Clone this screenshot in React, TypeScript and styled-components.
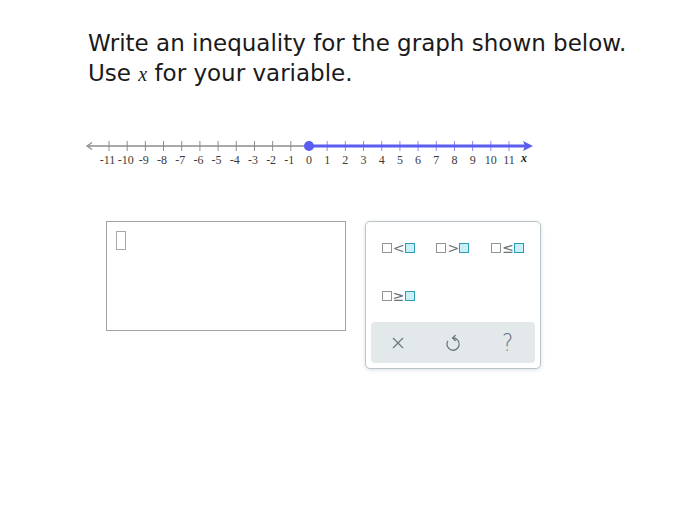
import styled, { createGlobalStyle } from 'styled-components';

const GlobalStyle = createGlobalStyle`
  body {
    margin: 0;
    background: #ffffff;
    font-family: "DejaVu Sans", Verdana, sans-serif;
  }
`;

const Page = styled.div`
  width: 700px;
  height: 524px;
  padding: 28px 0 0 88px;
  box-sizing: border-box;
`;

const Prompt = styled.p`
  margin: 0;
  font-size: 23px;
  line-height: 30px;
  color: #1a1a1a;
`;

const Var = styled.span`
  font-family: "Liberation Serif", "Times New Roman", serif;
  font-style: italic;
  font-size: 20px;
`;

const LineWrap = styled.div`
  margin: 47px 0 0 -8px;
  height: 40px;

  svg {
    display: block;
  }
`;

const AnswerRow = styled.div`
  display: flex;
  align-items: flex-start;
  gap: 19px;
  margin: 45px 0 0 18px;
`;

const AnswerBox = styled.div`
  width: 240px;
  height: 110px;
  box-sizing: border-box;
  border: 1px solid #a3a3a3;
  padding: 9px 0 0 9px;
`;

const Cursor = styled.div`
  width: 10px;
  height: 19px;
  box-sizing: border-box;
  border: 1px solid #a8a8a8;
`;

const Keypad = styled.div`
  width: 176px;
  box-sizing: border-box;
  border: 1px solid #b9c4c8;
  border-radius: 5px;
  box-shadow: 0 1px 4px rgba(0, 40, 60, 0.15);
  padding: 4px 5px 5px 5px;
  background: #fff;
`;

const KeyGrid = styled.div`
  display: grid;
  grid-template-columns: repeat(3, 1fr);
  grid-auto-rows: 44px;
  row-gap: 4px;
  margin-bottom: 4px;
`;

const Key = styled.div`
  display: flex;
  align-items: center;
  justify-content: center;
  gap: 1px;
  color: #6d7478;
  font-size: 14px;
  font-family: "DejaVu Sans", sans-serif;
`;

const Slot = styled.span<{ $filled?: boolean }>`
  display: inline-block;
  width: 10px;
  height: 10px;
  box-sizing: border-box;
  border: 1.5px solid ${({ $filled }) => ($filled ? '#2a9db3' : '#8e9599')};
  background: ${({ $filled }) => ($filled ? '#c9eef6' : '#ffffff')};
`;

const Op = styled.span`
  display: inline-block;
  width: 11px;
  text-align: center;
  line-height: 1;
`;

const ToolBar = styled.div`
  display: grid;
  grid-template-columns: repeat(3, 1fr);
  height: 41px;
  background: #e3e9eb;
  border-radius: 4px;
`;

const Tool = styled.div`
  display: flex;
  align-items: center;
  justify-content: center;
  color: #6f7a80;
`;

const Help = styled.span`
  font-family: "DejaVu Sans", sans-serif;
  font-weight: 300;
  font-size: 25px;
  line-height: 1;
  color: #66737a;
  transform: scaleX(0.85);
`;

const NumberLine = () => {
  const x0 = 309;
  const step = 400 / 22;
  const ticks = Array.from({ length: 23 }, (_, i) => i - 11);
  return (
    <svg width="470" height="40" viewBox="80 135 470 40">
      <line x1={88} y1={145} x2={x0} y2={145} stroke="#8c8c8c" strokeWidth={1.3} />
      <polyline points="92,141.5 87,145 92,148.5" fill="none" stroke="#8c8c8c" strokeWidth={1.2} />
      {ticks.map((t) => {
        const x = x0 + t * step;
        return (
          <line
            key={t}
            x1={x}
            y1={140}
            x2={x}
            y2={150}
            stroke={t > 0 ? '#8a8cf0' : '#8c8c8c'}
            strokeWidth={1}
          />
        );
      })}
      <line x1={x0} y1={145} x2={525} y2={145} stroke="#5a5df0" strokeWidth={3} />
      <polygon points="533,145 523,140 525,145 523,150" fill="#5a5df0" />
      <circle cx={x0} cy={145} r={5} fill="#5a5df0" />
      {ticks.map((t) => (
        <text
          key={t}
          x={x0 + t * step + (t < 0 ? -1.5 : 0)}
          y={163}
          textAnchor="middle"
          fontFamily='"Liberation Serif", "Times New Roman", serif'
          fontSize={12}
          fill="#3a3a3a"
        >
          {t}
        </text>
      ))}
      <text
        x={524}
        y={161}
        textAnchor="middle"
        fontFamily='"Liberation Serif", "Times New Roman", serif'
        fontSize={12}
        fontStyle="italic"
        fontWeight="bold"
        fill="#222"
      >
        x
      </text>
    </svg>
  );
};

const keys = ['<', '>', '≤', '≥'];

export default function App() {
  return (
    <>
      <GlobalStyle />
      <Page>
        <Prompt>Write an inequality for the graph shown below.</Prompt>
        <Prompt>
          Use <Var>x</Var> for your variable.
        </Prompt>
        <LineWrap>
          <NumberLine />
        </LineWrap>
        <AnswerRow>
          <AnswerBox>
            <Cursor />
          </AnswerBox>
          <Keypad>
            <KeyGrid>
              {keys.map((k) => (
                <Key key={k}>
                  <Slot />
                  <Op>{k}</Op>
                  <Slot $filled />
                </Key>
              ))}
            </KeyGrid>
            <ToolBar>
              <Tool>
                <svg width="14" height="14" viewBox="0 0 14 14">
                  <path d="M2 2 L12 12 M12 2 L2 12" stroke="#6f7a80" strokeWidth="1.3" fill="none" />
                </svg>
              </Tool>
              <Tool>
                <svg width="18" height="20" viewBox="0 0 16 18">
                  <path
                    d="M8 4.5 A5.5 5.5 0 1 1 3.2 7.4"
                    stroke="#6f7a80"
                    strokeWidth="1.2"
                    fill="none"
                    strokeLinecap="round"
                  />
                  <path d="M10 2.3 L7.6 4.5 L10 6.7" stroke="#6f7a80" strokeWidth="1.2" fill="none" strokeLinecap="round" strokeLinejoin="round" />
                </svg>
              </Tool>
              <Tool>
                <Help>?</Help>
              </Tool>
            </ToolBar>
          </Keypad>
        </AnswerRow>
      </Page>
    </>
  );
}
